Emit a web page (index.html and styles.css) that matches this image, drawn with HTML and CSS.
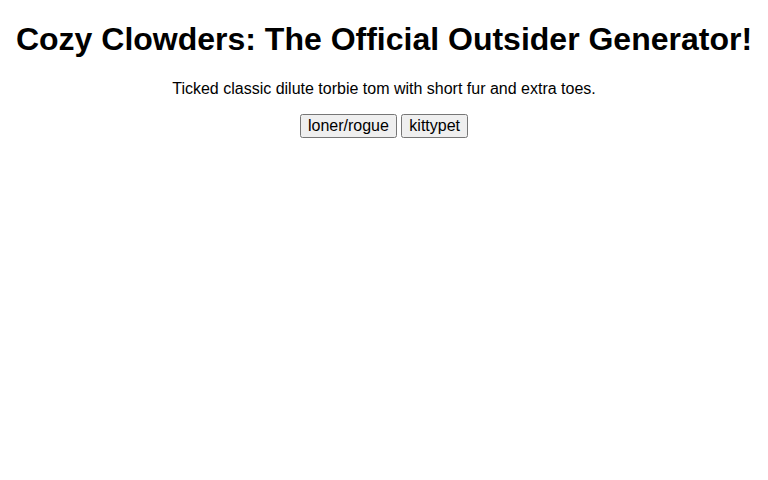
FILE: index.html
```html
<!DOCTYPE html>
<html>
<head>
<meta charset="utf-8">
<link rel="stylesheet" href="styles.css">
</head>
<body>
<h1 class="title">Cozy Clowders: The Official Outsider Generator!</h1>
<p class="desc">Ticked classic dilute torbie tom with short fur and extra toes.</p>
<div class="buttons">
<button class="btn">loner/rogue</button>
<button class="btn">kittypet</button>
</div>
</body>
</html>
```
FILE: styles.css
```css
body {
  margin: 0 8px;
  font-family: "Liberation Sans", Arial, sans-serif;
  text-align: center;
  color: #000;
  background: #fff;
}
.title {
  font-size: 32px;
  margin: 21.44px 0;
}
.desc {
  font-size: 16px;
  margin: 16px 0;
}
.btn {
  font-family: "Liberation Sans", Arial, sans-serif;
  font-size: 16px;
}
```
